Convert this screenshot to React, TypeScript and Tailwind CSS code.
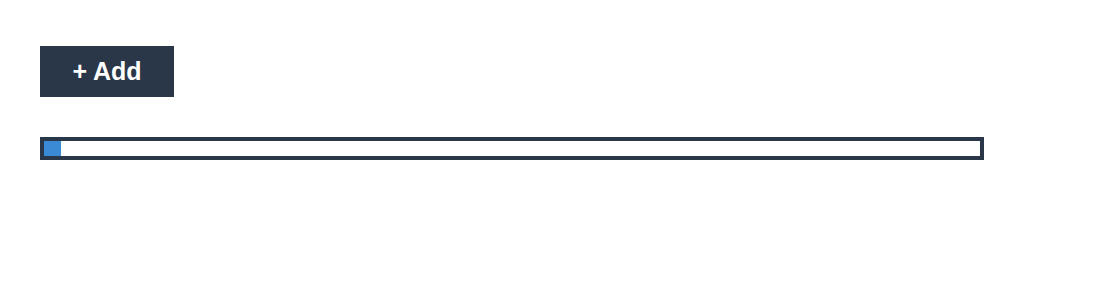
export default function App() {
  const progress = 17;

  return (
    <div className="min-h-[298px] bg-white px-10 pt-[46px] font-['Liberation_Sans',Arial,sans-serif]">
      <button
        type="button"
        className="flex h-[51px] w-[134px] items-center justify-center bg-[#2a3748] text-[25px] font-bold text-white"
      >
        + Add
      </button>

      <div className="mt-10 h-[23px] w-[944px] border-4 border-[#2a3748] bg-white">
        <div className="h-full bg-[#3a8ad6]" style={{ width: progress }} />
      </div>
    </div>
  );
}
